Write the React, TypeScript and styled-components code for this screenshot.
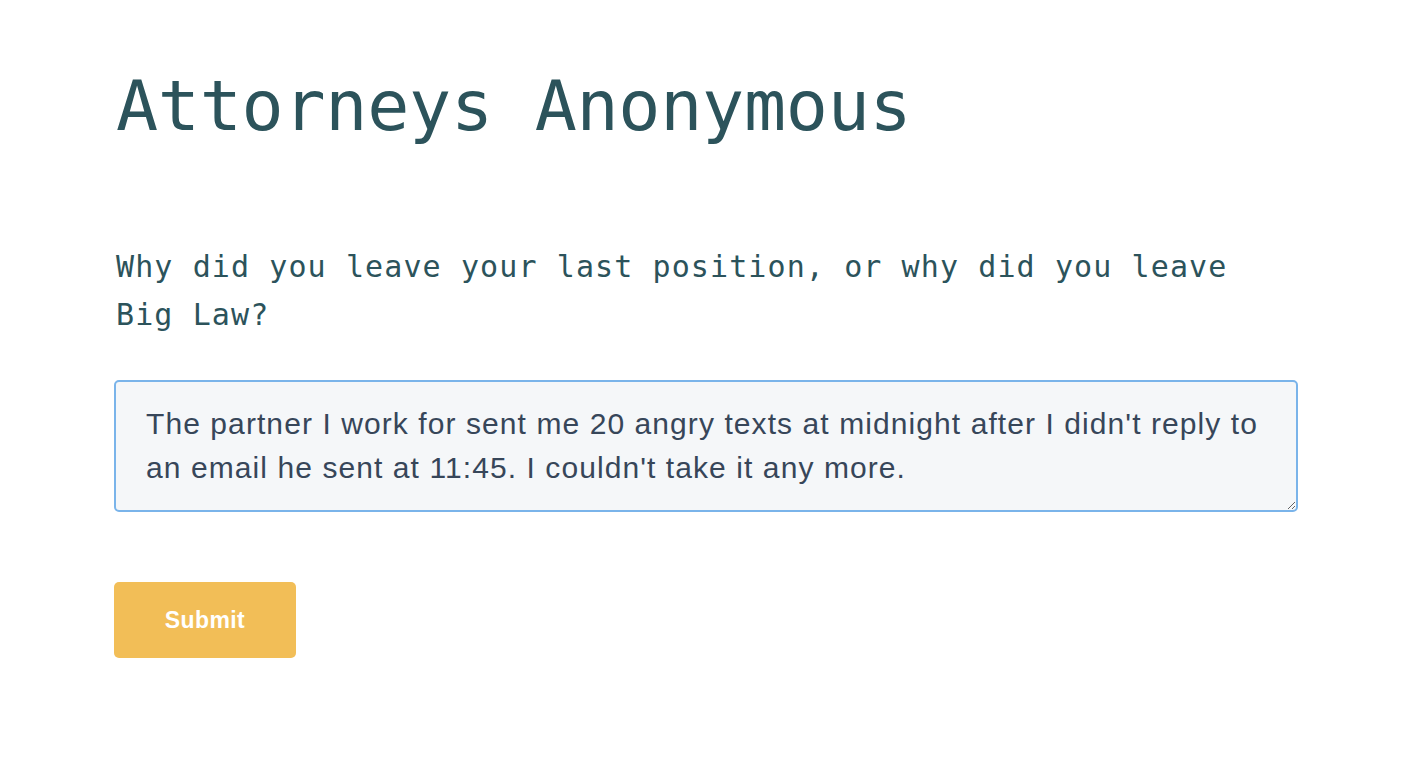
import styled, { createGlobalStyle } from "styled-components";
import { useState } from "react";

const GlobalStyle = createGlobalStyle`
  body {
    margin: 0;
    background: #ffffff;
    font-family: "Liberation Sans", Arial, sans-serif;
  }
`;

function App() {
  const [answer, setAnswer] = useState(
    "The partner I work for sent me 20 angry texts at midnight after I didn't reply to an email he sent at 11:45. I couldn't take it any more."
  );

  return (
    <Page>
      <GlobalStyle />
      <Title>Attorneys Anonymous</Title>
      <Form onSubmit={(e) => e.preventDefault()}>
        <Question htmlFor="answer">
          Why did you leave your last position, or why did you leave Big Law?
        </Question>
        <Answer
          id="answer"
          value={answer}
          onChange={(e) => setAnswer(e.target.value)}
        />
        <SubmitButton type="submit">Submit</SubmitButton>
      </Form>
    </Page>
  );
}

const Page = styled.main`
  width: 1184px;
  padding: 64px 0 0 114px;
`;

const Title = styled.h1`
  margin: 0;
  padding-left: 2px;
  font-family: "DejaVu Sans Mono", monospace;
  font-size: 70px;
  font-weight: 400;
  letter-spacing: -0.28px;
  line-height: 84px;
  color: #2c535b;
`;

const Form = styled.form`
  display: flex;
  flex-direction: column;
  align-items: flex-start;
  margin-top: 95px;
`;

const Question = styled.label`
  display: block;
  padding-left: 2px;
  font-family: "DejaVu Sans Mono", monospace;
  font-size: 30px;
  letter-spacing: 1.1px;
  line-height: 48px;
  color: #2c535b;
`;

const Answer = styled.textarea`
  display: block;
  box-sizing: border-box;
  width: 100%;
  height: 132px;
  margin-top: 41px;
  padding: 20px 30px;
  border: 2px solid #7ab4ea;
  border-radius: 5px;
  background: #f5f7f9;
  font-family: "Liberation Sans", Arial, sans-serif;
  font-size: 30px;
  letter-spacing: 1.08px;
  line-height: 44px;
  color: #374659;
  outline: none;
`;

const SubmitButton = styled.button`
  width: 182px;
  height: 76px;
  margin-top: 70px;
  border: none;
  border-radius: 5px;
  background: #f2be57;
  color: #ffffff;
  font-family: "Liberation Sans", Arial, sans-serif;
  font-size: 23px;
  letter-spacing: 0.4px;
  font-weight: 700;
  cursor: pointer;
`;

export default App;
